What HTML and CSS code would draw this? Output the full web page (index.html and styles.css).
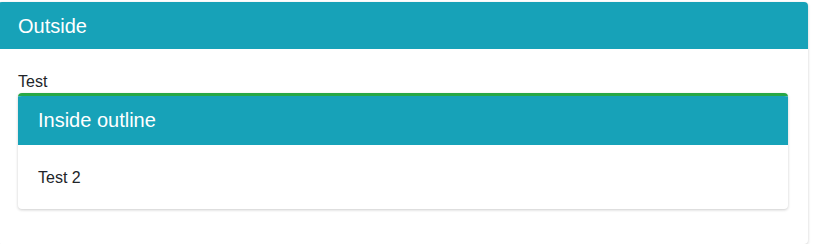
FILE: index.html
```html
<!DOCTYPE html>
<html>
<head>
<meta charset="utf-8">
<link rel="stylesheet" href="styles.css">
</head>
<body>
<div class="card outer">
  <div class="card-header">Outside</div>
  <div class="card-body outer-body">
    <div class="line">Test</div>
    <div class="card inner">
      <div class="card-header inner-header">Inside outline</div>
      <div class="card-body inner-body">Test 2</div>
    </div>
  </div>
</div>
</body>
</html>
```

FILE: styles.css
```css
html, body {
  margin: 0;
  padding: 0;
  background: #ffffff;
}
body {
  padding-top: 2px;
  font-family: "Liberation Sans", Arial, sans-serif;
  color: #212529;
  font-size: 16px;
}
.card {
  background: #fff;
  border-radius: 4px;
  box-shadow: 0 1px 3px rgba(0, 0, 0, 0.2);
  overflow: hidden;
}
.outer {
  margin-left: -2px;
  width: 810px;
}
.card-header {
  background: #17a2b8;
  color: #fff;
  font-size: 20px;
  line-height: 24px;
  padding: 12px 20px 11px;
}
.outer-body {
  padding: 22px 20px 35px;
}
.line {
  line-height: 21px;
}
.inner {
  margin-top: 1px;
  border-top: 3px solid #28a745;
}
.inner-header {
  padding: 12px 20px 13px;
}
.inner-body {
  padding: 21px 20px 19px;
  line-height: 24px;
}
```
